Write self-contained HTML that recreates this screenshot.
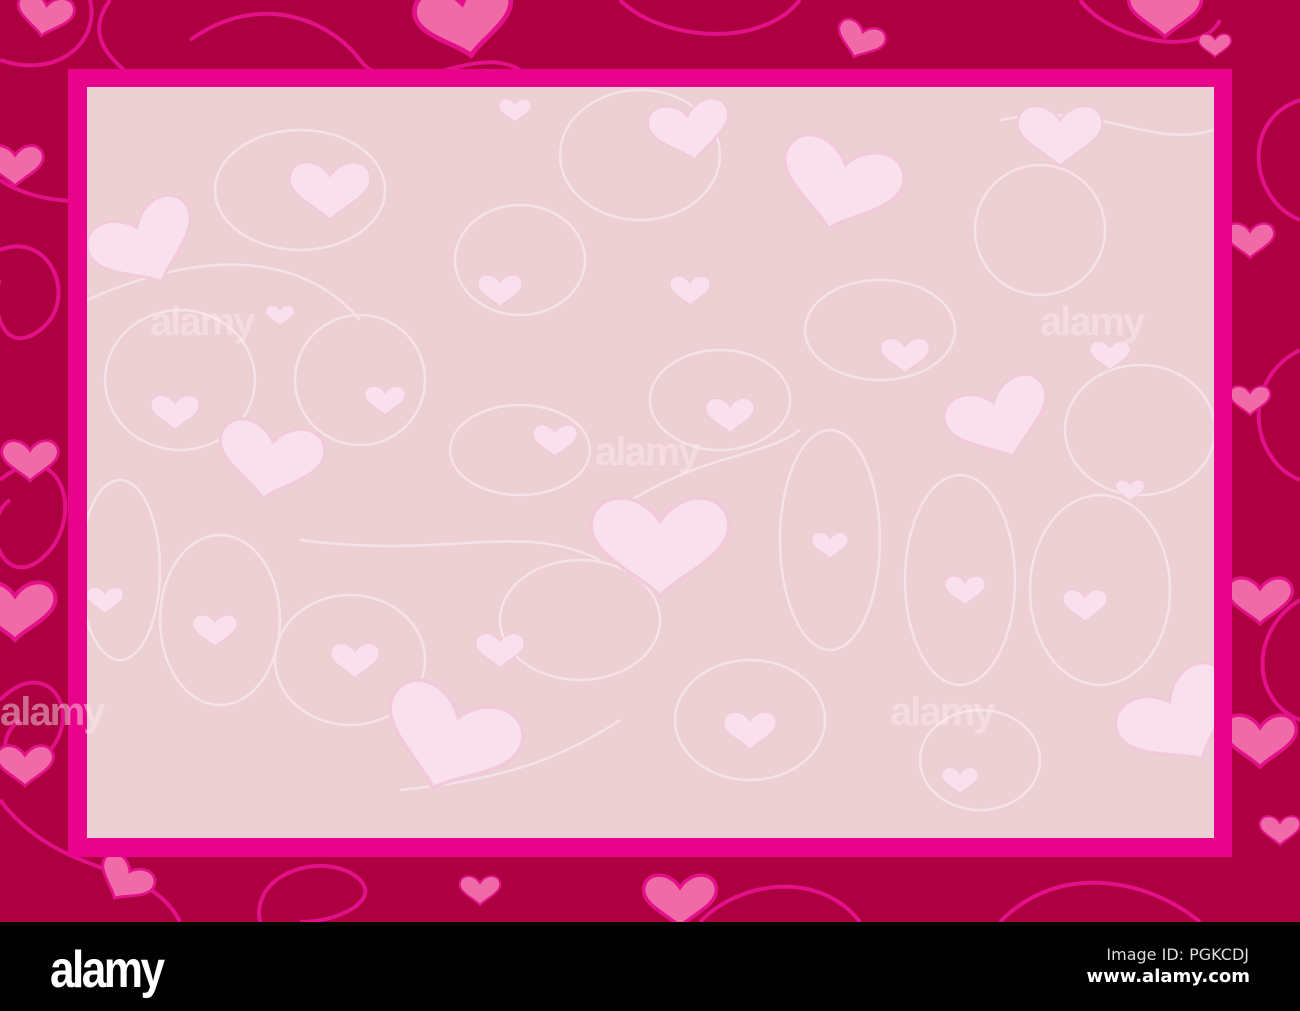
<!DOCTYPE html>
<html><head><meta charset="utf-8"><style>
html,body{margin:0;padding:0;background:#000}
.wrap{position:relative;width:1300px;height:1011px;overflow:hidden;background:#000;font-family:"Liberation Sans",sans-serif}
svg{position:absolute;left:0;top:0}
.logo{position:absolute;left:50px;top:940px;color:#fff;font:bold 52px "Liberation Sans",sans-serif;letter-spacing:-3px;transform:scaleX(0.85);transform-origin:left}
.t1{position:absolute;right:51px;top:945px;color:#ddd;font:16px "DejaVu Sans",sans-serif;white-space:nowrap;text-align:right}
.t2{position:absolute;right:50px;top:966px;color:#fff;font:bold 18px "DejaVu Sans",sans-serif;white-space:nowrap;text-align:right}
.wm{position:absolute;color:rgba(255,235,240,0.45);font:bold 40px "Liberation Sans",sans-serif;letter-spacing:-2px}
</style></head><body><div class="wrap">
<svg width="1300" height="922" viewBox="0 0 1300 922">
<defs>
<path id="h" d="M0 30 C-10 18 -45 5 -40 -15 C-36 -32 -12 -32 0 -14 C12 -32 36 -32 40 -15 C45 5 10 18 0 30Z"/>
</defs>
<rect width="1300" height="922" fill="#ac0040"/>
<g fill="none" stroke="#e4108a" stroke-width="4">
<path d="M0 60 C60 80 100 40 90 0"/>
<path d="M110 0 C60 70 200 90 190 150 C180 200 60 220 0 180"/>
<path d="M190 40 C260 -10 330 20 360 60 C400 110 470 40 520 70"/>
<path d="M0 250 C50 230 80 300 40 330 C0 360 -10 300 0 280"/>
<path d="M0 480 C60 430 90 520 40 560 C0 590 -20 520 10 500"/>
<path d="M0 700 C50 650 90 720 40 760 C10 790 -10 740 20 720"/>
<path d="M0 800 C60 880 150 860 180 922"/>
<path d="M260 922 C250 870 330 850 360 880 C380 900 340 922 300 922"/>
<path d="M700 922 C740 880 820 870 860 922"/>
<path d="M1000 922 C1060 860 1150 880 1200 922"/>
<path d="M1300 100 C1240 120 1250 200 1300 220"/>
<path d="M1300 350 C1240 380 1250 460 1300 480"/>
<path d="M1300 600 C1250 630 1250 700 1300 720"/>
<path d="M1080 0 C1110 40 1200 60 1220 20"/>
<path d="M620 0 C660 40 760 50 800 0"/>
</g>
<g fill="#f06aa8" stroke="#e4108a" stroke-width="4">
<use href="#h" transform="translate(45 15) scale(0.7) rotate(10)"/>
<use href="#h" transform="translate(465 20) scale(1.2) rotate(-10)"/>
<use href="#h" transform="translate(860 40) scale(0.6) rotate(20)"/>
<use href="#h" transform="translate(1165 10) scale(0.9)"/>
<use href="#h" transform="translate(1215 45) scale(0.4)"/>
<use href="#h" transform="translate(15 165) scale(0.7)"/>
<use href="#h" transform="translate(1250 240) scale(0.6)"/>
<use href="#h" transform="translate(30 460) scale(0.7)"/>
<use href="#h" transform="translate(15 610) scale(1)"/>
<use href="#h" transform="translate(25 765) scale(0.7)"/>
<use href="#h" transform="translate(1250 400) scale(0.5)"/>
<use href="#h" transform="translate(1260 600) scale(0.8)"/>
<use href="#h" transform="translate(1260 740) scale(0.9)"/>
<use href="#h" transform="translate(125 880) scale(0.7) rotate(30)"/>
<use href="#h" transform="translate(680 900) scale(0.9)"/>
<use href="#h" transform="translate(480 890) scale(0.5)"/>
<use href="#h" transform="translate(1280 830) scale(0.5)"/>
</g>
<rect x="68" y="69" width="1164" height="788" fill="#e9028a"/>
<rect x="87" y="87" width="1127" height="751" fill="#ecd0d4"/>
<svg x="87" y="87" width="1127" height="751" viewBox="87 87 1127 751">
<g fill="none" stroke="#f6e3ea" stroke-width="2.5">
<ellipse cx="640" cy="155" rx="80" ry="65"/>
<ellipse cx="520" cy="260" rx="65" ry="55"/>
<ellipse cx="880" cy="330" rx="75" ry="50"/>
<ellipse cx="1040" cy="230" rx="65" ry="65"/>
<ellipse cx="360" cy="380" rx="65" ry="65"/>
<ellipse cx="180" cy="380" rx="75" ry="70"/>
<ellipse cx="520" cy="450" rx="70" ry="45"/>
<ellipse cx="720" cy="400" rx="70" ry="50"/>
<ellipse cx="830" cy="540" rx="50" ry="110"/>
<ellipse cx="960" cy="580" rx="55" ry="105"/>
<ellipse cx="1100" cy="590" rx="70" ry="95"/>
<ellipse cx="220" cy="620" rx="60" ry="85"/>
<ellipse cx="120" cy="570" rx="40" ry="90"/>
<ellipse cx="350" cy="660" rx="75" ry="65"/>
<ellipse cx="580" cy="620" rx="80" ry="60"/>
<ellipse cx="750" cy="720" rx="75" ry="60"/>
<ellipse cx="980" cy="760" rx="60" ry="50"/>
<ellipse cx="1140" cy="430" rx="75" ry="65"/>
<ellipse cx="300" cy="190" rx="85" ry="60"/>
<path d="M87 300 C200 250 300 250 360 320"/>
<path d="M600 520 C700 450 760 460 800 430"/>
<path d="M300 540 C450 560 520 520 600 560"/>
<path d="M400 790 C500 780 560 760 620 720"/>
<path d="M1000 120 C1100 100 1150 150 1214 130"/>
</g>
<g fill="#f8e0ec" stroke="#f2c9d8" stroke-width="2">
<use href="#h" transform="translate(145 245) scale(1.35) rotate(-25)"/>
<use href="#h" transform="translate(330 190) scale(1.0)"/>
<use href="#h" transform="translate(690 130) scale(1.0) rotate(-10)"/>
<use href="#h" transform="translate(840 185) scale(1.5) rotate(15)"/>
<use href="#h" transform="translate(1060 135) scale(1.05)"/>
<use href="#h" transform="translate(515 110) scale(0.4)"/>
<use href="#h" transform="translate(1245 230) scale(0.4)"/>
<use href="#h" transform="translate(270 460) scale(1.3) rotate(10)"/>
<use href="#h" transform="translate(1000 420) scale(1.3) rotate(-20)"/>
<use href="#h" transform="translate(660 545) scale(1.7)"/>
<use href="#h" transform="translate(450 740) scale(1.7) rotate(20)"/>
<use href="#h" transform="translate(1180 720) scale(1.5) rotate(-30)"/>
<use href="#h" transform="translate(175 412) scale(0.6)"/>
<use href="#h" transform="translate(385 400) scale(0.5)"/>
<use href="#h" transform="translate(555 440) scale(0.55)"/>
<use href="#h" transform="translate(730 415) scale(0.6)"/>
<use href="#h" transform="translate(905 355) scale(0.6)"/>
<use href="#h" transform="translate(500 290) scale(0.55)"/>
<use href="#h" transform="translate(690 290) scale(0.5)"/>
<use href="#h" transform="translate(1110 355) scale(0.5)"/>
<use href="#h" transform="translate(1085 605) scale(0.55)"/>
<use href="#h" transform="translate(965 590) scale(0.5)"/>
<use href="#h" transform="translate(830 545) scale(0.45)"/>
<use href="#h" transform="translate(215 630) scale(0.55)"/>
<use href="#h" transform="translate(355 660) scale(0.6)"/>
<use href="#h" transform="translate(500 650) scale(0.6)"/>
<use href="#h" transform="translate(750 730) scale(0.65)"/>
<use href="#h" transform="translate(960 780) scale(0.45)"/>
<use href="#h" transform="translate(105 600) scale(0.45)"/>
<use href="#h" transform="translate(280 315) scale(0.35)"/>
<use href="#h" transform="translate(1130 490) scale(0.35)"/>
</g>
</svg>
</svg>
<div class="wm" style="left:150px;top:300px">alamy</div>
<div class="wm" style="left:595px;top:430px">alamy</div>
<div class="wm" style="left:1040px;top:300px">alamy</div>
<div class="wm" style="left:0px;top:690px">alamy</div>
<div class="wm" style="left:890px;top:690px">alamy</div>
<div class="logo">alamy</div>
<div class="t1">Image ID: PGKCDJ</div>
<div class="t2">www.alamy.com</div>
</div></body></html>
